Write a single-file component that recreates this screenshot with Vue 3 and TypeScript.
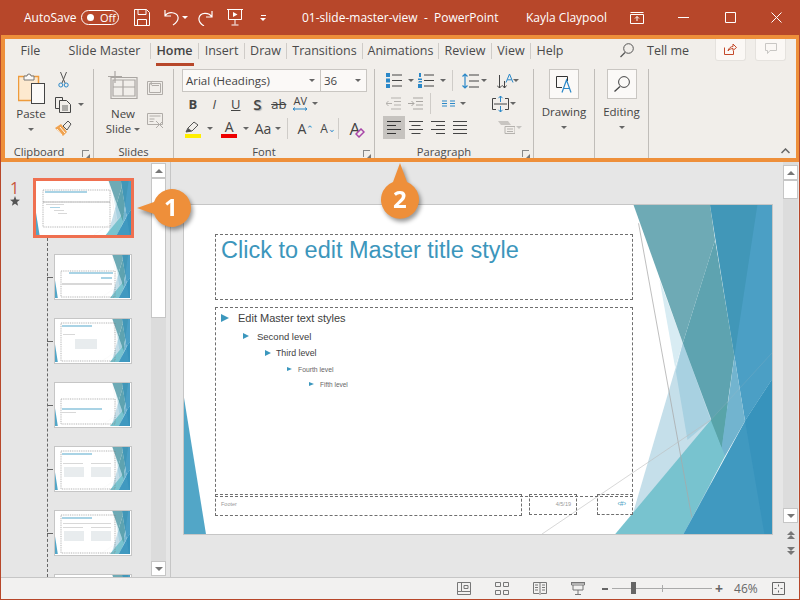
<script setup lang="ts">
interface Part { x: number; y: number; w: number; h: number; k: 'd' | 't' | 'l' | 'p' }
const art: [string, string][] = [
  ['#c5dfea', '548,460 380,1035 600,1035 683,640'],
  ['#d8ecf3', '478,270 548,460 525,535'],
  ['#a8d1e1', '527,545 548,460 632,692 562,752'],
  ['#78c3cf', '345,1035 632,692 683,640 675,800 550,1035'],
  ['#4099c0', '550,1035 735,695 816,570 816,1035'],
  ['#3793bc', '735,695 816,570 816,1035 793,1035'],
  ['#4b9fc5', '630,45 816,45 816,570 735,695 703,500'],
  ['#4197b8', '630,45 772,45 703,500'],
  ['#6eaab5', '400,45 630,45 645,150 548,460'],
  ['#5ea3b0', '645,150 703,500 683,640 665,775 548,460'],
  ['#58a4a9', '632,692 683,640 665,775'],
  ['#72b4cf', '703,500 735,695 675,800 665,775'],
  ['#52a6c7', '-951,625 -951,1035 -885,1035'],
]
const first: Part[] = [
  { x: 7, y: 9, w: 67, h: 12, k: 'd' }, { x: 7, y: 21, w: 67, h: 25, k: 'd' },
  { x: 9, y: 10, w: 42, h: 2, k: 't' }, { x: 10, y: 23, w: 18, h: 1, k: 'l' },
  { x: 14, y: 26, w: 10, h: 1, k: 't' }, { x: 18, y: 29, w: 10, h: 1, k: 'l' },
  { x: 22, y: 32, w: 9, h: 1, k: 'l' },
]
const grid2: Part[] = [
  { x: 6, y: 4, w: 54, h: 38, k: 'd' }, { x: 7, y: 6, w: 30, h: 2, k: 't' },
  { x: 8, y: 16, w: 20, h: 1, k: 'l' }, { x: 36, y: 16, w: 20, h: 1, k: 'l' },
  { x: 9, y: 20, w: 20, h: 10, k: 'p' }, { x: 36, y: 20, w: 20, h: 10, k: 'p' },
]
const thumbs: Part[][] = [
  [{ x: 6, y: 16, w: 54, h: 26, k: 'd' }, { x: 14, y: 17, w: 44, h: 2, k: 't' }, { x: 46, y: 22, w: 11, h: 2, k: 't' }, { x: 7, y: 28, w: 50, h: 2, k: 'l' }],
  [{ x: 6, y: 4, w: 54, h: 38, k: 'd' }, { x: 7, y: 6, w: 30, h: 2, k: 't' }, { x: 8, y: 15, w: 12, h: 1, k: 'l' }, { x: 20, y: 20, w: 22, h: 10, k: 'p' }],
  [{ x: 6, y: 16, w: 54, h: 25, k: 'd' }, { x: 7, y: 25, w: 40, h: 2, k: 't' }, { x: 7, y: 29, w: 14, h: 1, k: 'l' }],
  grid2,
  [...grid2, { x: 8, y: 12, w: 48, h: 1, k: 'l' }],
  grid2,
]
const tabs = [
  { t: 'File', w: 51 }, { t: 'Slide Master', w: 94 }, { t: 'Home', w: 48 }, { t: 'Insert', w: 46 },
  { t: 'Draw', w: 42 }, { t: 'Transitions', w: 76 }, { t: 'Animations', w: 76 }, { t: 'Review', w: 53 },
  { t: 'View', w: 39 }, { t: 'Help', w: 39 },
]
</script>

<template>
  <div class="app">
    <svg class="defs" aria-hidden="true">
      <symbol id="art" viewBox="-951 45 1767 990" preserveAspectRatio="none">
        <polygon v-for="p in art" :key="p[1]" :fill="p[0]" :points="p[1]" />
        <line x1="415" y1="100" x2="575" y2="985" stroke="#a9a9a9" stroke-width="3" opacity=".75" />
        <line x1="125" y1="1035" x2="632" y2="692" stroke="#bdbdbd" stroke-width="3" opacity=".6" />
        <line x1="632" y1="692" x2="816" y2="490" stroke="#bdbdbd" stroke-width="3" opacity=".15" />
      </symbol>
    </svg>

    <header class="titlebar">
      <span class="autosave">AutoSave</span>
      <span class="toggle"><i class="knob"></i><span>Off</span></span>
      <svg class="qa save" width="16" height="17" viewBox="0 0 16 17" fill="none" stroke="#fff"><path d="M.5.5h12l3 3v13H.5zM4 .5v5h8v-5M3.5 16.5v-6h9v6" /></svg>
      <svg class="qa undo" width="15" height="17" viewBox="0 0 15 17" fill="none" stroke="#fff" stroke-width="1.2"><path d="M1 1v6h6M1 7c3-5 12-4 13 1 .6 3-2 6-5 8" /></svg>
      <i class="caret white undo-caret"></i>
      <svg class="qa redo" width="15" height="17" viewBox="0 0 15 17" fill="none" stroke="#fff" stroke-width="1.2"><path d="M14 2v6H8M14 8C11 3 2 3 1 9c-.5 3 2 6 5 8" /></svg>
      <svg class="qa present" width="16" height="17" viewBox="0 0 16 17" fill="none" stroke="#fff"><path d="M0 .5h16M1.5.5v10h13V.5M8 10.500v5M4.500 16h7" /><path d="M6 3l4.500 2.500L6 8z" fill="#fff" stroke="none" /></svg>
      <span class="customize"><i></i><i class="caret white"></i></span>
      <span class="doc">01-slide-master-view&nbsp; -&nbsp; PowerPoint</span>
      <span class="user">Kayla Claypool</span>
      <svg class="win-ribbon" width="14" height="12" viewBox="0 0 14 12" fill="none" stroke="#fff"><path d="M.5 2.500h13v9H.5zM.5.500h13M7 9V4.500M5 6.500l2-2 2 2" /></svg>
      <svg class="win-min" width="11" height="1" viewBox="0 0 11 1"><path d="M0 .5h11" stroke="#fff" /></svg>
      <svg class="win-max" width="11" height="11" viewBox="0 0 11 11"><path d="M.5.5h10v10H.5z" fill="none" stroke="#fff" /></svg>
      <svg class="win-close" width="11" height="11" viewBox="0 0 11 11"><path d="M.5.5l10 10M10.500.5l-10 10" stroke="#fff" /></svg>
    </header>

    <section class="ribbon">
      <nav class="tabs">
        <span v-for="(tab, i) in tabs" :key="tab.t" class="tab" :class="{ sep: i > 0, plain: i < 2, active: tab.t === 'Home' }" :style="{ width: tab.w + 'px' }"><b>{{ tab.t }}</b></span>
        <svg class="search" width="14" height="15" viewBox="0 0 14 15" fill="none" stroke="#555"><circle cx="8.500" cy="5.500" r="4.800" /><path d="M5 9.500L.5 14" stroke-width="1.300" /></svg>
        <span class="tell">Tell me</span>
        <span class="share">
          <svg width="13" height="12" viewBox="0 0 13 12" fill="none" stroke="#c4492a"><path d="M.5 4.500v7h9V8M4 8c.5-3 3-4.500 5-4.500V1l3.500 3.500L9 7.500V5.500C7 5.500 5 6.500 4 8z" /></svg>
        </span>
        <span class="share">
          <svg width="12" height="12" viewBox="0 0 12 12" fill="none" stroke="#c9c7c4"><path d="M.5.5h11v7H5L2.500 10.500v-3h-2z" /></svg>
        </span>
      </nav>

      <div class="groups">
        <div class="group g-clip">
          <div class="gbody">
            <div class="paste">
              <svg width="27" height="33" viewBox="0 0 27 33"><rect x=".5" y="4.500" width="20" height="24" fill="#fde9cf" stroke="#ee9b3c" stroke-width="1.500" /><path d="M6 8V4h3a2 2 0 0 1 4 0h3v4z" fill="#fbf9f7" stroke="#777" /><rect x="13.500" y="11.500" width="13" height="20" fill="#fbf9f7" stroke="#444" /></svg>
              <span class="lab">Paste</span>
              <i class="caret solo"></i>
            </div>
            <div class="clipcol">
              <svg class="scissors" width="11" height="16" viewBox="0 0 11 16" fill="none"><path d="M2.500 0l4.500 11M8.500 0L4 11" stroke="#555" /><circle cx="2.800" cy="13" r="2" stroke="#2b88c8" /><circle cx="8.200" cy="13" r="2" stroke="#2b88c8" /></svg>
              <span class="copyrow">
                <svg width="17" height="17" viewBox="0 0 17 17" fill="none" stroke="#444"><path d="M.5 1.500h7v11H.5z" /><path d="M4.500 4.500h7l4 4v8h-11z" fill="#f1eeea" /><path d="M7 10h6M7 12h6M7 14h6" stroke-width=".8" /></svg>
                <i class="caret"></i>
              </span>
              <svg class="painter" width="17" height="17" viewBox="0 0 17 17"><path d="M0 8l6-4 6 8-4 4z" fill="#f0a24f" /><path d="M2 9l5 6M5 7l5 6" stroke="#fbf9f7" /><path d="M8 6l5-5 3 3-4 6z" fill="#f1eeea" stroke="#555" /></svg>
            </div>
          </div>
          <div class="glabel launched"><span>Clipboard</span><i class="launch"></i></div>
        </div>

        <div class="group g-slides">
          <div class="gbody">
            <div class="newslide">
              <svg width="31" height="28" viewBox="0 0 31 28" fill="none" stroke="#aaa6a2" stroke-width="1.200"><path d="M3 6.500h26v21H3zM5 9h22v16H5zM5 16h22M15 9v16M0 5.500h14M7 0v12" /></svg>
              <span class="lab first">New</span>
              <span class="lab">Slide<i class="caret inl"></i></span>
            </div>
            <div class="slidecol">
              <svg width="16" height="15" viewBox="0 0 16 15" fill="none" stroke="#b0aca8"><path d="M.5 1.500h15v13H.5zM2.500 3.500h11v9h-11zM5 5.500h7M6 1L3 3.500 6 6" /></svg>
              <svg width="16" height="16" viewBox="0 0 16 16" fill="none" stroke="#b0aca8"><path d="M.5.5h15v11H.5zM2.500 3h11M2.500 6h5M2.500 8.500h4M9 8l7 7M16 8l-7 7" /></svg>
            </div>
          </div>
          <div class="glabel"><span>Slides</span></div>
        </div>

        <div class="group g-font">
          <div class="combos">
            <span class="combo c-font"><span>Arial (Headings)</span><i class="caret"></i></span>
            <span class="combo c-size"><span>36</span><i class="caret"></i></span>
          </div>
          <div class="row r-font2">
            <span class="b fb">B</span><span class="b fi">I</span><span class="b fu">U</span><span class="b fs">S</span><span class="b fab">ab</span>
            <span class="b av"><span>AV</span><svg width="16" height="4" viewBox="0 0 16 4" fill="none" stroke="#2b88c8"><path d="M1 2h14M3 .5L1 2l2 1.500M13 .5L15 2l-2 1.500" /></svg></span>
            <i class="caret"></i>
          </div>
          <div class="row r-font3">
            <span class="b colorb">
              <svg width="15" height="12" viewBox="0 0 15 12"><path d="M1 11l2-4 6-6 4 3-6 6z" fill="#f1eeea" stroke="#555" /><path d="M1 11l2-4 4 3z" fill="#555" /></svg>
              <i class="bar yellow"></i>
            </span>
            <i class="caret cc"></i>
            <span class="b colorb"><span class="fa">A</span><i class="bar red"></i></span>
            <i class="caret cc"></i>
            <span class="b fAa">Aa</span><i class="caret"></i>
            <i class="vsep s1"></i>
            <span class="b sz">A<sup>⌃</sup></span>
            <span class="b sz small">A<sup>⌄</sup></span>
            <i class="vsep s2"></i>
            <span class="b clr"><span>A</span><svg width="10" height="10" viewBox="0 0 10 10"><path d="M1 6l5-5 3 3-5 5z" fill="#f1eeea" stroke="#a845a8" stroke-width="1.500" /></svg></span>
          </div>
          <div class="glabel launched"><span>Font</span><i class="launch"></i></div>
        </div>

        <div class="group g-para">
          <div class="row r-p1">
            <span class="b"><svg width="16" height="15" viewBox="0 0 16 15"><path d="M0 0h4v4H0zM0 5.500h4v4H0zM0 11h4v4H0z" fill="#2b88c8" /><path d="M6 2h10M6 7.500h10M6 13h10" stroke="#444" /></svg></span><i class="caret cp"></i>
            <span class="b"><svg width="16" height="15" viewBox="0 0 16 15"><path d="M1 0h2v4H1zM0 5.500h4v1.500H0zM1 8h3v1.500H0zM0 11h4v4H0z" fill="#2b88c8" /><path d="M6 2h10M6 7.500h10M6 13h10" stroke="#444" /></svg></span><i class="caret cp"></i>
            <i class="vsep s3"></i>
            <span class="b"><svg width="17" height="16" viewBox="0 0 17 16" fill="none"><path d="M7 2h10M7 8h10M7 14h10" stroke="#444" /><path d="M3 1v14M.5 3.500L3 1l2.500 2.500M.5 12.500L3 15l2.500-2.500" stroke="#2b88c8" stroke-width="1.200" /></svg></span><i class="caret lead"></i>
            <span class="b td"><svg width="17" height="16" viewBox="0 0 17 16" fill="none"><path d="M2.500 2v13M0 12.500L2.500 15 5 12.500M7.500 8v7M5.500 12.500L7.500 15l2-2.500" stroke="#444" /><path d="M9 9.500L12.500 1 16 9.500M10.200 6.800h4.600" stroke="#2b88c8" /></svg></span><i class="caret"></i>
          </div>
          <div class="row r-p2">
            <span class="b"><svg width="15" height="13" viewBox="0 0 15 13" fill="none"><path d="M5 1h10M8 4.500h7M8 8h7M5 12h10" stroke="#b5b2ae" /><path d="M6 6.500H0M2.500 4L0 6.500 2.500 9" stroke="#b5b2ae" /></svg></span>
            <span class="b"><svg width="15" height="13" viewBox="0 0 15 13" fill="none"><path d="M5 1h10M8 4.500h7M8 8h7M5 12h10" stroke="#a9a6a2" /><path d="M0 6.500h6M3.500 4L6 6.500 3.500 9" stroke="#a9a6a2" /></svg></span>
            <i class="vsep s4"></i>
            <span class="b cols"><svg width="13" height="7" viewBox="0 0 13 7"><path d="M0 1h5M8 1h5M0 3.500h5M8 3.500h5M0 6h5M8 6h5" stroke="#2b88c8" /></svg></span><i class="caret"></i>
            <span class="b at"><svg width="17" height="16" viewBox="0 0 17 16" fill="none"><path d="M4 2.500H.5v11H4M13 2.500h3.500v11H13M2 8h13" stroke="#444" /><path d="M8.500 0v6M6.500 2.200L8.500 0l2 2.200M8.500 16v-6M6.500 13.800l2 2.200 2-2.200" stroke="#2b88c8" /></svg></span><i class="caret"></i>
          </div>
          <div class="row r-p3">
            <span class="al on"><svg width="14" height="13" viewBox="0 0 14 13"><path d="M0 .5h14M0 4.500h9M0 8.500h14M0 12.500h9" stroke="#333" /></svg></span>
            <span class="al"><svg width="14" height="13" viewBox="0 0 14 13"><path d="M0 .5h14M2.500 4.500h9M0 8.500h14M2.500 12.500h9" stroke="#444" /></svg></span>
            <span class="al"><svg width="14" height="13" viewBox="0 0 14 13"><path d="M0 .5h14M5 4.500h9M0 8.500h14M5 12.500h9" stroke="#444" /></svg></span>
            <span class="al"><svg width="14" height="13" viewBox="0 0 14 13"><path d="M0 .5h14M0 4.500h14M0 8.500h14M0 12.500h14" stroke="#444" /></svg></span>
            <span class="b smart"><svg width="17" height="13" viewBox="0 0 17 13"><path d="M0 0h10l3 4H3z" fill="#c8c5c1" /><path d="M7 5.500h10v7H7z" fill="#f1eeea" stroke="#b5b2ae" /><path d="M9 8h6M9 10.500h6" stroke="#b5b2ae" /></svg></span><i class="caret off"></i>
          </div>
          <div class="glabel launched"><span>Paragraph</span><i class="launch"></i></div>
        </div>

        <div class="group g-big">
          <div class="gbody col">
            <span class="bigbtn"><svg width="17" height="18" viewBox="0 0 17 18" fill="none"><path d="M6 12.500H.5V1.500h11V6" stroke="#333" /><path d="M6 17.500L10.500 5l4.500 12.500M7.500 13.500h6" stroke="#2b88c8" stroke-width="1.200" /></svg></span>
            <span class="lab biglab">Drawing</span>
            <i class="caret solo"></i>
          </div>
        </div>

        <div class="group g-edit">
          <div class="gbody col">
            <span class="bigbtn"><svg width="16" height="16" viewBox="0 0 16 16" fill="none"><circle cx="10" cy="6" r="5.400" stroke="#444" /><path d="M6 10.500L.5 15.500" stroke="#444" stroke-width="1.300" /></svg></span>
            <span class="lab biglab">Editing</span>
            <i class="caret solo"></i>
          </div>
        </div>
        <svg class="collapse" width="9" height="6" viewBox="0 0 9 6" fill="none"><path d="M.5 5L4.500 1l4 4" stroke="#666" stroke-width="1.500" /></svg>
      </div>
    </section>

    <main class="workspace">
      <aside class="sidebar">
        <div class="rail">
          <i class="tree"></i>
          <div class="row-first">
            <div class="slideno">
              <span>1</span>
              <svg width="10" height="10" viewBox="0 0 10 10"><path d="M5 0l1.300 3.500L10 3.700 7.100 6l1 3.800L5 7.700 1.900 9.800l1-3.800L0 3.700l3.700-.2z" fill="#555" /></svg>
            </div>
            <div class="thumb-main">
              <svg width="95" height="54" viewBox="0 0 95 54">
                <use href="#art" width="95" height="54" />
                <rect v-for="(p, i) in first" :key="i" :class="p.k" :x="p.x" :y="p.y" :width="p.w" :height="p.h" />
              </svg>
            </div>
          </div>
          <div v-for="(parts, n) in thumbs" :key="n" class="thumb">
            <svg width="75" height="43" viewBox="0 0 75 43">
              <use href="#art" width="75" height="43" />
              <rect v-for="(p, i) in parts" :key="i" :class="p.k" :x="p.x" :y="p.y" :width="p.w" :height="p.h" />
            </svg>
          </div>
        </div>
        <div class="vscroll">
          <span class="sbtn"><i class="up"></i></span>
          <span class="sthumb"></span>
          <span class="strack"></span>
          <span class="sbtn"><i class="down"></i></span>
        </div>
      </aside>

      <div class="stage">
        <div class="slide">
          <svg class="slide-art" viewBox="0 0 588 329" preserveAspectRatio="none"><use href="#art" width="588" height="329" /></svg>
          <div class="phold title-box"><span>Click to edit Master title style</span></div>
          <div class="phold body-box">
            <div class="lv l1"><i></i><span>Edit Master text styles</span></div>
            <div class="lv l2"><i></i><span>Second level</span></div>
            <div class="lv l3"><i></i><span>Third level</span></div>
            <div class="lv l4"><i></i><span>Fourth level</span></div>
            <div class="lv l5"><i></i><span>Fifth level</span></div>
          </div>
          <div class="foot">
            <div class="phold f-a">Footer</div>
            <div class="phold f-b">4/5/19</div>
            <div class="phold f-c">‹#›</div>
          </div>
        </div>
        <div class="vscroll right">
          <span class="sbtn up-btn"><i class="up"></i></span>
          <span class="sthumb short"></span>
          <span class="strack"></span>
          <span class="sbtn"><i class="down"></i></span>
          <span class="pager">
            <i class="up"></i><i class="up second"></i>
          </span>
          <span class="pager">
            <i class="down"></i><i class="down second"></i>
          </span>
        </div>
      </div>
    </main>

    <footer class="status">
      <svg width="14" height="13" viewBox="0 0 14 13" fill="none" stroke="#777"><path d="M.5.500h13v12H.5zM4.500.5v9h9M.5 9.500h4M7 3.500h4v3H7z" /></svg>
      <svg width="14" height="13" viewBox="0 0 14 13" fill="none" stroke="#777"><path d="M.5.500h5v4h-5zM8.500.500h5v4h-5zM.5 8.500h5v4h-5zM8.500 8.500h5v4h-5z" /></svg>
      <svg width="14" height="13" viewBox="0 0 14 13" fill="none" stroke="#777"><path d="M.5.500h13v11H8l-1 1-1-1H.5zM7 .5v11M2 3h3M2 5.500h3M2 8h3M9 3h3M9 5.500h3M9 8h3" /></svg>
      <svg width="14" height="13" viewBox="0 0 14 13" fill="none" stroke="#777"><path d="M0 .5h14M.5 1h13v2H.5zM2 3v5h10V3M7 8v4M4 12.500h6" /></svg>
      <span class="zoomminus"></span>
      <span class="slider"><i class="tick"></i><i class="grip"></i></span>
      <span class="zoomplus">+</span>
      <span class="pct">46%</span>
      <svg class="fit" width="13" height="13" viewBox="0 0 13 13" fill="none" stroke="#666"><path d="M.5.500h12v12H.5zM6.500 2.500v2M6.500 8.500v2M2.500 6.500h2M8.500 6.500h2" /></svg>
    </footer>

    <div class="callout c1">
      <svg width="62" height="42" viewBox="0 0 62 42"><path d="M0 22l17-6a19 19 0 1 1 0 12z" fill="#ee8f3a" /></svg>
      <span>1</span>
    </div>
    <div class="callout c2">
      <svg width="40" height="56" viewBox="0 0 40 56"><path d="M20 0l7 19a19 19 0 1 1-14 0z" fill="#ee8f3a" /></svg>
      <span>2</span>
    </div>
  </div>
</template>

<style scoped>
.app { position: relative; width: 800px; height: 600px; box-sizing: border-box; display: flex; flex-direction: column; overflow: hidden; border: 1px solid #b7472a; border-top: 0; background: #e6e6e6; font-family: "Open Sans", "Noto Sans", sans-serif; color: #444; }
.defs { position: absolute; width: 0; height: 0; }
.titlebar { height: 35px; flex: none; background: #b7472a; color: #fff; display: flex; align-items: center; font-size: 12px; white-space: nowrap; }
.autosave { margin-left: 23px; width: 57px; }
.toggle { width: 38px; height: 15px; border: 1px solid #fff; border-radius: 9px; box-sizing: border-box; display: flex; align-items: center; font-size: 11px; padding-left: 5px; gap: 6px; }
.knob { width: 7px; height: 7px; border-radius: 50%; background: #fff; }
.qa { flex: none; }
.save { margin-left: 15px; }
.undo { margin-left: 14px; }
.undo-caret { margin-left: 3px; }
.redo { margin-left: 10px; }
.present { margin-left: 14px; }
.customize { margin-left: 17px; width: 6px; display: flex; flex-direction: column; align-items: center; gap: 2px; }
.customize i:first-child { width: 5px; height: 1px; background: #fff; }
.doc { margin-left: 36px; width: 224px; }
.user { width: 104px; }
.win-min { margin-left: 34px; }
.win-max { margin-left: 36px; }
.win-close { margin-left: 35px; }

.caret { display: inline-block; flex: none; width: 0; height: 0; border: 3px solid transparent; border-top: 3.500px solid #666; border-bottom: 0; }
.caret.white { border-top-color: #fff; }
.caret.off { border-top-color: #c5c3c0; }
.caret.solo { display: block; margin: 7px auto 0; }
.caret.inl { margin-left: 3px; vertical-align: middle; }

.ribbon { height: 127px; flex: none; box-sizing: border-box; border: 4px solid #ee8f3a; border-right-width: 3px; background: #f1eeea; display: flex; flex-direction: column; }
.tabs { height: 23px; flex: none; display: flex; align-items: center; font-size: 12.500px; color: #4a4a4a; }
.tab { height: 16px; box-sizing: border-box; position: relative; display: flex; align-items: center; justify-content: center; flex: none; line-height: 16px; }
.tab b { font-weight: 400; }
.tab.sep { border-left: 1px solid #cfccc8; }
.tab.plain { border-left: 0; }
.tab:nth-child(2) { padding-left: 3px; }
.tab.active b { font-weight: 600; color: #444; }
.tab.active::after { content: ""; position: absolute; left: 5px; right: 4px; bottom: -7px; height: 2.500px; background: #b7472a; }
.search { margin-left: 51px; flex: none; }
.tell { margin-left: 13px; width: 68px; }
.share { width: 31px; height: 22px; margin-right: 9px; margin-top: -2px; display: flex; align-items: center; justify-content: center; background: #fbf8f5; border: 1px solid #e5e2de; border-top: 0; border-radius: 0 0 3px 3px; box-sizing: border-box; }

.groups { flex: 1; display: flex; position: relative; min-height: 0; }
.group { margin-top: 7px; height: 89px; box-sizing: border-box; border-right: 1px solid #c0bdb9; position: relative; flex: none; display: flex; flex-direction: column; }
.gbody { display: flex; flex: 1; min-height: 0; }
.gbody.col { flex-direction: column; align-items: center; }
.g-clip { width: 89px; }
.g-slides { width: 80px; }
.g-font { width: 201px; padding-left: 8px; }
.g-para { width: 159px; padding-left: 8px; }
.g-big { width: 61px; }
.g-edit { width: 54px; }
.glabel { height: 16px; flex: none; margin-top: auto; text-align: center; font-size: 11.200px; line-height: 20px; position: relative; color: #4a4a4a; }
.glabel.launched { padding-right: 20px; }
.g-font .glabel, .g-para .glabel { margin-left: -8px; }
.launch { position: absolute; right: 4px; top: 8px; width: 6px; height: 6px; border-left: 1px solid #888; border-top: 1px solid #888; }
.launch::after { content: ""; position: absolute; right: -1px; bottom: -1px; border: 2.500px solid transparent; border-right-color: #777; border-bottom-color: #777; }
.lab { display: block; font-size: 11.500px; line-height: 15px; text-align: center; white-space: nowrap; }
.paste { margin: 3px 0 0 8px; width: 36px; display: flex; flex-direction: column; align-items: center; }
.paste .lab { margin-top: 1px; }
.clipcol { margin-left: 5px; width: 30px; display: flex; flex-direction: column; }
.scissors { margin: 3px 0 0 4px; }
.copyrow { margin: 8px 0 0 1px; display: flex; align-items: center; gap: 6px; }
.painter { margin: 7px 0 0 1px; }
.newslide { margin: 2px 0 0 7px; width: 44px; display: flex; flex-direction: column; align-items: center; }
.newslide .first { margin-top: 7px; }
.slidecol { margin: 11px 0 0 2px; display: flex; flex-direction: column; gap: 18px; }
.combos { display: flex; height: 23px; }
.combo { height: 23px; box-sizing: border-box; background: #fbf9f7; border: 1px solid #c9c6c2; display: flex; align-items: center; justify-content: space-between; padding: 0 5px 0 3px; font-size: 11.500px; white-space: nowrap; }
.c-font { width: 139px; }
.c-size { width: 46px; border-left: 0; }
.row { display: flex; align-items: center; height: 23px; }
.b { width: 21.500px; height: 21px; display: flex; align-items: center; justify-content: center; flex: none; position: relative; font-size: 13px; }
.fb { font-weight: 700; }
.fi { font-style: italic; }
.fu { text-decoration: underline; }
.fs { font-weight: 600; font-size: 15px; text-shadow: 1px 1px 1px #aaa; }
.fab { text-decoration: line-through; }
.av { flex-direction: column; font-size: 11px; line-height: 10px; gap: 1px; }
.av + .caret { margin-left: 1px; }
.r-font3 { margin-top: 2px; }
.colorb { flex-direction: column; justify-content: flex-start; }
.colorb svg { margin-top: 3px; }
.fa { font-size: 14px; line-height: 13px; margin-top: 2px; }
.bar { width: 16px; height: 4px; display: block; margin-top: 1px; }
.yellow { background: #ffee00; }
.red { background: #ee0000; }
.cc { margin: 0 6px 0 3px; }
.fAa { font-size: 14px; width: 24px; margin-left: -4px; }
.vsep { width: 1px; background: #cfccc8; flex: none; height: 21px; }
.s1 { margin: 0 7px 0 6px; }
.sz { font-size: 14px; width: 22px; }
.sz sup { font-size: 9px; color: #2b88c8; line-height: 0; vertical-align: 5px; }
.sz.small { font-size: 12px; }
.s2 { margin: 0 5px 0 -1px; }
.clr { font-size: 17px; }
.clr svg { position: absolute; right: 1px; bottom: 1px; }
.cp { margin: 0 2px 0 3px; }
.s3 { margin: 0 7px 0 4px; }
.lead { margin: 0 6px 0 -1px; }
.td { margin-left: 2px; }
.td + .caret { margin-left: -3px; }
.r-p2 .vsep { margin: 0 9px 0 4px; }
.cols { width: 16px; }
.cols + .caret { margin-left: 4px; }
.at { margin-left: 24px; }
.at + .caret { margin-left: -2px; }
.r-p3 { margin-top: 1px; }
.al { width: 22px; height: 23px; display: flex; align-items: center; justify-content: center; flex: none; }
.al.on { background: #c6c3bf; }
.smart { margin-left: 25px; }
.smart + .caret { margin-left: -2px; }
.bigbtn { width: 30px; height: 30px; flex: none; box-sizing: border-box; display: flex; align-items: center; justify-content: center; background: #fbf9f7; border: 1px solid #c9c6c2; }
.biglab { margin-top: 5px; }
.collapse { position: absolute; right: 6px; bottom: 4px; }

.workspace { flex: 1; min-height: 0; display: flex; }
.sidebar { width: 170px; flex: none; box-sizing: border-box; border-right: 1px solid #c6c6c6; display: flex; }
.rail { width: 150px; flex: none; position: relative; overflow: hidden; padding-top: 16px; box-sizing: border-box; }
.tree { position: absolute; left: 46px; top: 76px; bottom: 0; border-left: 1px dashed #666; }
.row-first { display: flex; }
.slideno { width: 32px; display: flex; flex-direction: column; align-items: center; padding-right: 5px; box-sizing: border-box; }
.slideno span { font-size: 16px; line-height: 20px; color: #c8553d; }
.slideno svg { margin-top: -2px; }
.thumb-main { width: 101px; height: 60px; box-sizing: border-box; border: 3px solid #ef7050; background: #fff; }
.thumb-main svg, .thumb svg { display: block; }
.thumb { position: relative; width: 78px; height: 46px; margin: 18px 0 0 53px; box-sizing: border-box; border: 1.500px solid #c6c6c6; background: #fff; }
.row-first + .thumb { margin-top: 16px; }
.thumb::before { content: ""; position: absolute; left: -8px; top: 50%; width: 6px; border-top: 1px dashed #666; }
rect.d { fill: none; stroke: #808080; stroke-width: .6; stroke-dasharray: 1 .8; }
rect.t { fill: #a9d3e5; }
rect.l { fill: #d8d8d8; }
rect.p { fill: #e8ecee; }
.vscroll { width: 15px; flex: none; display: flex; flex-direction: column; background: #dcdcdc; }
.sbtn { height: 15px; flex: none; box-sizing: border-box; background: #fff; border: 1px solid #c6c6c6; display: flex; align-items: center; justify-content: center; }
.sidebar .vscroll { margin-top: 1px; margin-bottom: 1px; }
.sthumb { height: 140px; flex: none; background: #fff; border: 1px solid #c6c6c6; box-sizing: border-box; }
.sthumb.short { height: 19px; }
.strack { flex: 1; }
.up { width: 0; height: 0; border: 4px solid transparent; border-bottom: 4px solid #777; border-top: 0; display: block; }
.down { width: 0; height: 0; border: 4px solid transparent; border-top: 4px solid #777; border-bottom: 0; display: block; }
.stage { flex: 1; display: flex; justify-content: space-between; padding: 42px 1px 0 12px; min-width: 0; position: relative; }
.slide { width: 590px; height: 331px; box-sizing: border-box; border: 1px solid #c6c6c6; background: #fff; position: relative; padding: 29px 0 0 31px; flex: none; overflow: hidden; }
.slide-art { position: absolute; left: 0; top: 0; width: 100%; height: 100%; }
.phold { position: relative; box-sizing: border-box; border: 1px dashed #6f6f6f; }
.title-box { width: 418px; height: 66px; font-family: "Liberation Sans", sans-serif; font-size: 23.500px; line-height: 28px; color: #3c96bc; padding: 1px 0 0 5px; white-space: nowrap; }
.body-box { width: 418px; height: 190px; margin-top: 7px; font-family: "Liberation Sans", sans-serif; color: #404040; }
.lv { display: flex; align-items: center; white-space: nowrap; }
.lv i { width: 0; height: 0; border-left: 8px solid #3b97bd; border-top: 4px solid transparent; border-bottom: 4px solid transparent; }
.l1 { height: 16px; margin: 2px 0 0 5px; font-size: 11px; gap: 9px; }
.l2 { height: 20px; margin-left: 27px; font-size: 9.500px; gap: 8px; }
.l3 { height: 13px; margin-left: 49px; font-size: 8.800px; gap: 5px; }
.l3 i, .l2 i { border-left-width: 6px; border-top-width: 3px; border-bottom-width: 3px; }
.l4 { height: 14px; margin: 3px 0 0 71px; font-size: 6.800px; gap: 6px; color: #666; }
.l5 { height: 14px; margin: 1px 0 0 93px; font-size: 6.500px; gap: 6px; color: #666; }
.l4 i, .l5 i { border-left-width: 5px; border-top-width: 2.500px; border-bottom-width: 2.500px; }
.foot { display: flex; margin-top: -3px; font-family: "Liberation Sans", sans-serif; font-size: 5.500px; line-height: 18px; color: #999; height: 22px; width: 418px; }
.f-a { width: 307px; padding-left: 5px; margin-right: 7px; height: 22px; }
.f-b { width: 48px; text-align: right; padding-right: 5px; margin-right: 20px; height: 21px; }
.f-c { width: 36px; text-align: right; padding-right: 6px; color: #4a9fc4; font-size: 7px; height: 21px; }
.vscroll.right { margin-top: -42px; height: calc(100% + 42px); }
.vscroll.right .up-btn { margin-top: 3px; }
.pager { height: 24px; flex: none; background: #e6e6e6; display: flex; flex-direction: column; align-items: center; justify-content: center; }
.pager:last-child { height: 30px; justify-content: flex-start; }

.status { height: 22px; flex: none; box-sizing: border-box; background: #f2f1f0; border-top: 1px solid #c6c6c6; display: flex; align-items: center; padding-left: 456px; gap: 24px; }
.zoomminus { width: 6px; height: 2px; background: #666; margin-left: -7px; }
.slider { margin-left: -20px; width: 100px; height: 1px; background: #aaa; position: relative; }
.tick { position: absolute; left: 50px; top: -3px; width: 1px; height: 7px; background: #aaa; }
.grip { position: absolute; left: 19px; top: -6px; width: 5px; height: 12px; background: #666; }
.zoomplus { margin-left: -21px; font-size: 14px; font-weight: 700; line-height: 14px; color: #666; }
.pct { margin-left: -13px; font-size: 12px; color: #666; }
.fit { margin-left: -10px; }

.callout { position: absolute; filter: drop-shadow(2px 3px 2px rgba(0, 0, 0, .4)); }
.callout svg { display: block; }
.callout span { position: absolute; color: #fff; font-weight: 700; font-size: 24px; line-height: 30px; }
.c1 { left: 136px; top: 186px; }
.c1 span { left: 27px; top: 6px; }
.c2 { left: 379px; top: 163px; }
.c2 span { left: 13px; top: 21px; }
</style>
